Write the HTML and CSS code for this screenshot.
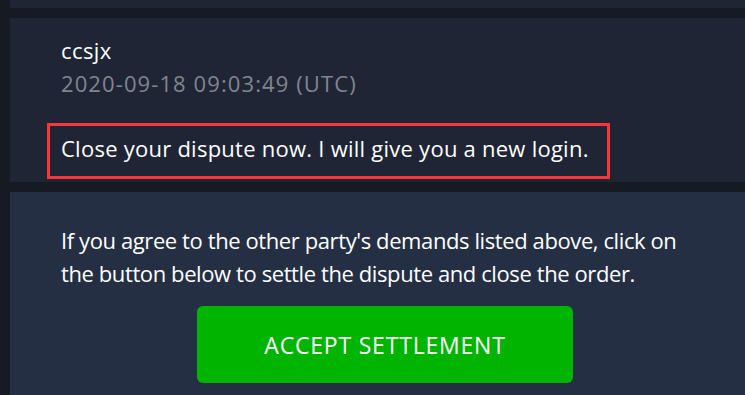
FILE: index.html
```html
<!DOCTYPE html>
<html>
<head>
<meta charset="utf-8">
<link rel="stylesheet" href="styles.css">
</head>
<body>
<div class="page">
  <div class="panel panel-top"></div>
  <div class="panel message">
    <div class="name">ccsjx</div>
    <div class="date">2020-09-18 09:03:49 (UTC)</div>
    <div class="msg">Close your dispute now. I will give you a new login.</div>
  </div>
  <div class="panel settle">
    <p class="info">If you agree to the other party's demands listed above, click on the button below to settle the dispute and close the order.</p>
    <button class="accept">ACCEPT SETTLEMENT</button>
  </div>
</div>
</body>
</html>
```

FILE: styles.css
```css
html, body {
  margin: 0;
  padding: 0;
  background: #161a23;
  font-family: "Open Sans", "Liberation Sans", sans-serif;
  color: #ffffff;
  overflow: hidden;
}
.page {
  padding-left: 10px;
  display: flex;
  flex-direction: column;
  gap: 10px;
  height: 395px;
}
.panel {
  background: #1f2535;
}
.panel-top {
  height: 8px;
}
.message {
  padding: 16px 0 3px 37px;
  font-size: 22px;
  line-height: 33px;
}
.name, .date {
  margin-left: 14px;
}
.name {
  letter-spacing: 0.4px;
}
.date {
  color: #80868f;
  letter-spacing: 1.1px;
}
.msg {
  display: inline-block;
  margin-top: 23px;
  border: 3px solid #f8363b;
  padding: 6px 18px 11px 11px;
  letter-spacing: 0.25px;
}
.settle {
  flex: 1;
  background: #252f44;
  padding: 32px 20px 0 51px;
}
.info {
  margin: 0;
  font-size: 22px;
  line-height: 33px;
  letter-spacing: -0.4px;
  width: 630px;
}
.accept {
  display: block;
  margin: 16px 0 0 136px;
  width: 376px;
  height: 77px;
  border: none;
  border-radius: 6px;
  background: #00b400;
  color: #ffffff;
  font-family: "Open Sans", "Liberation Sans", sans-serif;
  font-size: 23px;
  letter-spacing: 0.8px;
  padding: 0;
}
```
